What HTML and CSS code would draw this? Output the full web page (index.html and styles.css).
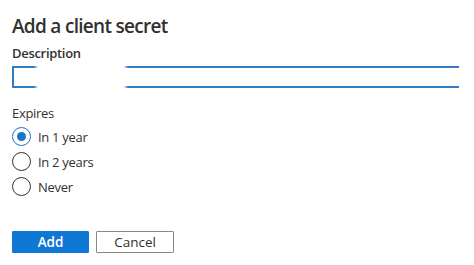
FILE: index.html
```html
<!DOCTYPE html>
<html>
<head>
<meta charset="utf-8">
<link rel="stylesheet" href="styles.css">
</head>
<body>
<div class="panel">
  <h1 class="title">Add a client secret</h1>
  <label class="label">Description</label>
  <div class="field">
    <div class="input"></div>
    <div class="redact"></div>
  </div>
  <div class="label expires">Expires</div>
  <div class="radios">
    <div class="radio-row"><span class="radio checked"></span><span class="radio-text">In 1 year</span></div>
    <div class="radio-row"><span class="radio"></span><span class="radio-text">In 2 years</span></div>
    <div class="radio-row"><span class="radio"></span><span class="radio-text">Never</span></div>
  </div>
  <div class="buttons">
    <button class="btn primary">Add</button>
    <button class="btn secondary">Cancel</button>
  </div>
</div>
</body>
</html>
```
FILE: styles.css
```css
html, body {
  margin: 0;
  padding: 0;
  background: #ffffff;
}
body {
  font-family: "Open Sans", "Noto Sans", sans-serif;
  color: #323130;
  width: 474px;
  height: 265px;
  overflow: hidden;
}
.panel {
  padding: 12px 15px 0 12px;
  display: flex;
  flex-direction: column;
}
.title {
  margin: 0;
  font-size: 19px;
  font-weight: 600;
  line-height: 28px;
  letter-spacing: -0.7px;
}
.label {
  font-size: 13px;
  font-weight: 600;
  line-height: 18px;
  margin-top: 4px;
  letter-spacing: -0.3px;
}
.field {
  position: relative;
  margin-top: 4px;
  height: 22px;
}
.input {
  height: 18px;
  border: 2px solid #2f7bc9;
  border-right: none;
  border-radius: 1px 0 0 1px;
}
.redact {
  position: absolute;
  left: 24px;
  top: -3px;
  width: 90px;
  height: 28px;
  background: #ffffff;
  filter: blur(1.5px);
}
.expires {
  margin-top: 16px;
  font-weight: 400;
}
.radios {
  display: flex;
  flex-direction: column;
  margin-top: 2px;
}
.radio-row {
  display: flex;
  align-items: center;
  height: 25px;
}
.radio {
  box-sizing: border-box;
  width: 19px;
  height: 19px;
  border: 1px solid #323130;
  border-radius: 50%;
  margin-right: 7px;
  position: relative;
  flex: none;
}
.radio.checked {
  border-color: #1a73c8;
}
.radio.checked::after {
  content: "";
  position: absolute;
  left: 4px;
  top: 4px;
  width: 9px;
  height: 9px;
  border-radius: 50%;
  background: #1a73c8;
}
.radio-text {
  font-size: 13px;
  line-height: 18px;
  letter-spacing: -0.3px;
}
.buttons {
  display: flex;
  gap: 7px;
  margin-top: 32px;
}
.btn {
  box-sizing: border-box;
  height: 22px;
  width: 77px;
  font-family: "Open Sans", "Noto Sans", sans-serif;
  font-size: 13.5px;
  line-height: 18px;
  padding: 0;
  border-radius: 1px;
}
.primary {
  background: #0f78d4;
  border: 1px solid #0f78d4;
  color: #ffffff;
  font-weight: 600;
}
.secondary {
  width: 78px;
  background: #ffffff;
  border: 1px solid #8a8886;
  color: #323130;
}
```
